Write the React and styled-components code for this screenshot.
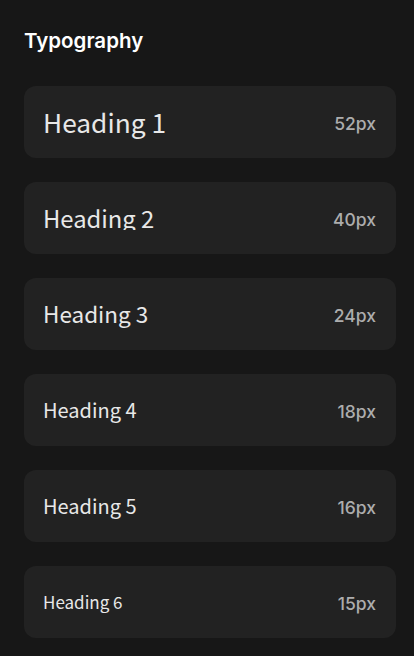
import React from 'react';
import styled, {createGlobalStyle} from 'styled-components';

const GlobalStyle = createGlobalStyle`
  html, body {
    margin: 0;
    padding: 0;
    background: #171717;
  }
  body {
    font-family: Inter, "Noto Sans", sans-serif;
  }
`;

const Page = styled.div`
  min-height: 656px;
  padding: 28px 18px 0 24px;
  box-sizing: border-box;
`;

const Title = styled.h2`
  margin: 0 0 32px 0;
  font-size: 20.5px;
  line-height: 26px;
  font-weight: 600;
  color: #ffffff;
`;

const List = styled.div`
  display: flex;
  flex-direction: column;
  gap: 24px;
`;

const Card = styled.div`
  display: flex;
  align-items: center;
  justify-content: space-between;
  height: 72px;
  padding: 0 20px 0 19px;
  background: #222222;
  border-radius: 12px;
  box-sizing: border-box;
`;

const Sample = styled.div`
  font-family: "Noto Sans CJK JP", "Noto Sans", sans-serif;
  font-size: ${p => p.size}px;
  line-height: ${p => (p.clip ? 1.0 : 1.3)};
  color: #e8e8e8;
  overflow: ${p => (p.clip ? 'hidden' : 'visible')};
`;

const Size = styled.span`
  padding-top: 2px;
  font-size: 17.5px;
  font-weight: 500;
  color: #adadad;
`;

const headings = [
  {label: 'Heading 1', size: 26.3, px: '52px'},
  {label: 'Heading 2', size: 23.8, px: '40px', clip: true},
  {label: 'Heading 3', size: 22.5, px: '24px'},
  {label: 'Heading 4', size: 20, px: '18px'},
  {label: 'Heading 5', size: 20, px: '16px'},
  {label: 'Heading 6', size: 17, px: '15px'},
];

export default function App() {
  return (
    <Page>
      <GlobalStyle />
      <Title>Typography</Title>
      <List>
        {headings.map(h => (
          <Card key={h.label}>
            <Sample size={h.size} clip={h.clip}>{h.label}</Sample>
            <Size>{h.px}</Size>
          </Card>
        ))}
      </List>
    </Page>
  );
}
